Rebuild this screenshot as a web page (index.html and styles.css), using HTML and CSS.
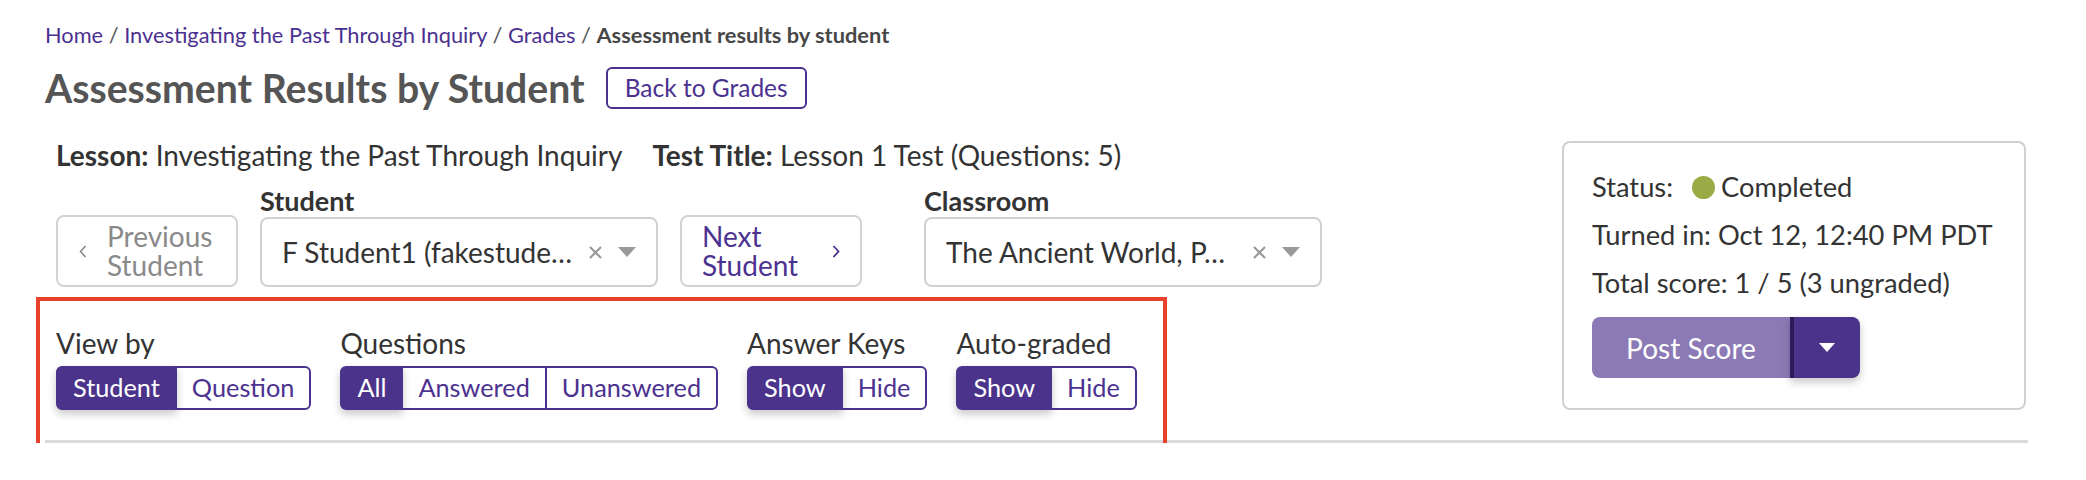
FILE: index.html
```html
<!DOCTYPE html>
<html lang="en">
<head>
<meta charset="utf-8">
<title>Assessment Results by Student</title>
<link rel="stylesheet" href="styles.css">
</head>
<body>
<div class="page">
  <nav class="breadcrumb">
    <a href="#">Home</a> / <a href="#">Investigating the Past Through Inquiry</a> / <a href="#">Grades</a> / <span class="current">Assessment results by student</span>
  </nav>

  <div class="title-row">
    <h1>Assessment Results by Student</h1>
    <button class="btn-outline" type="button">Back to Grades</button>
  </div>

  <div class="content">
    <div class="main">
      <p class="meta"><span><b>Lesson:</b> Investigating the Past Through Inquiry</span><span class="meta-item"><b>Test Title:</b> Lesson 1 Test (Questions: 5)</span></p>

      <div class="selectors">
        <button class="nav-btn prev" type="button" disabled>
          <svg class="chev" width="8" height="13" viewBox="0 0 8 13"><polyline points="6.5,1 1.5,6.5 6.5,12" fill="none" stroke="#8a8a8a" stroke-width="1.6"/></svg>
          <span>Previous<br>Student</span>
        </button>

        <div class="field">
          <label class="field-label">Student</label>
          <div class="select">
            <span class="value">F Student1 (fakestude…</span>
            <svg class="clear" width="15" height="15" viewBox="0 0 15 15"><path d="M2 2 L13 13 M13 2 L2 13" stroke="#9a9a9a" stroke-width="2.2" fill="none"/></svg>
            <svg class="arrow" width="18" height="10" viewBox="0 0 18 10"><polygon points="0,0 18,0 9,10" fill="#9a9a9a"/></svg>
          </div>
        </div>

        <button class="nav-btn next" type="button">
          <span>Next<br>Student</span>
          <svg class="chev" width="8" height="13" viewBox="0 0 8 13"><polyline points="1.5,1 6.5,6.5 1.5,12" fill="none" stroke="#4b3190" stroke-width="1.8"/></svg>
        </button>

        <div class="field classroom">
          <label class="field-label">Classroom</label>
          <div class="select">
            <span class="value">The Ancient World, P…</span>
            <svg class="clear" width="15" height="15" viewBox="0 0 15 15"><path d="M2 2 L13 13 M13 2 L2 13" stroke="#9a9a9a" stroke-width="2.2" fill="none"/></svg>
            <svg class="arrow" width="18" height="10" viewBox="0 0 18 10"><polygon points="0,0 18,0 9,10" fill="#9a9a9a"/></svg>
          </div>
        </div>
      </div>

      <div class="toggles">
        <div class="toggle">
          <div class="toggle-label">View by</div>
          <div class="seg"><button class="on" type="button">Student</button><button type="button">Question</button></div>
        </div>
        <div class="toggle">
          <div class="toggle-label">Questions</div>
          <div class="seg"><button class="on" type="button">All</button><button type="button">Answered</button><button type="button">Unanswered</button></div>
        </div>
        <div class="toggle">
          <div class="toggle-label">Answer Keys</div>
          <div class="seg"><button class="on" type="button">Show</button><button type="button">Hide</button></div>
        </div>
        <div class="toggle">
          <div class="toggle-label">Auto-graded</div>
          <div class="seg"><button class="on" type="button">Show</button><button type="button">Hide</button></div>
        </div>
      </div>
    </div>

    <aside class="card">
      <div class="card-line">Status: <span class="dot"></span>Completed</div>
      <div class="card-line">Turned in: Oct 12, 12:40 PM PDT</div>
      <div class="card-line">Total score: 1 / 5 (3 ungraded)</div>
      <div class="split">
        <button class="split-main" type="button">Post Score</button>
        <button class="split-drop" type="button"><svg width="16" height="9" viewBox="0 0 16 9"><polygon points="0,0 16,0 8,9" fill="#fff"/></svg></button>
      </div>
    </aside>
  </div>

  <hr class="divider">

  <div class="highlight"></div>
</div>
</body>
</html>
```

FILE: styles.css
```css
* { box-sizing: border-box; }
html, body { margin: 0; background: #fff; }
body { font-family: Lato, "Noto Sans", sans-serif; color: #333; }
button { font-family: Lato, "Noto Sans", sans-serif; cursor: pointer; }

.page { position: relative; padding: 21px 58px 0 45px; }

.breadcrumb { font-size: 21.8px; line-height: 28px; color: #555; }
.breadcrumb a { color: #4b3190; text-decoration: none; }
.breadcrumb .current { font-weight: 700; color: #474747; }

.title-row { display: flex; align-items: center; gap: 21px; margin-top: 16px; height: 46px; }
h1 { margin: 0; font-size: 39.2px; line-height: 46px; font-weight: 700; color: #555; }
.btn-outline { height: 42px; padding: 0 17px; border: 2px solid #4b3190; border-radius: 6px; background: #fff; color: #4b3190; font-size: 24.5px; line-height: 1; }

.content { display: flex; justify-content: space-between; align-items: flex-start; margin-top: 27px; }
.main { padding-left: 11px; }

.meta { margin: 0; font-size: 28px; line-height: 34px; color: #333; white-space: nowrap; }
.meta b { font-weight: 700; }
.meta-item { margin-left: 30px; }

.selectors { display: flex; align-items: flex-end; gap: 22px; margin-top: 13px; }
.nav-btn { flex: none; width: 182px; height: 72px; border: 2px solid #d3d3d3; border-radius: 8px; background: #fff; display: flex; align-items: center; font-size: 28px; line-height: 29px; text-align: left; }
.nav-btn.prev { color: #8a8a8a; gap: 20px; padding: 0 0 0 21px; cursor: default; }
.nav-btn.next { color: #4b3190; justify-content: space-between; padding: 0 20px; }
.chev { flex: none; }

.field-label { display: block; font-size: 27px; line-height: 32px; font-weight: 700; color: #333; }
.select { width: 398px; height: 70px; border: 2px solid #d0d0d0; border-radius: 8px; display: flex; align-items: center; padding: 0 20px; font-size: 28px; color: #333; }
.select .value { flex: 1; white-space: nowrap; overflow: hidden; }
.select .clear { flex: none; margin: 0 15px 0 8px; }
.select .arrow { flex: none; }
.classroom { margin-left: 40px; }

.toggles { display: flex; gap: 29px; margin-top: 40px; }
.toggle-label { font-size: 28px; line-height: 32px; color: #333; margin-bottom: 7px; white-space: nowrap; }
.seg { display: flex; }
.seg button { height: 44px; padding: 0 15px; border: 2px solid #4b3190; margin-left: -2px; background: #fff; color: #4b3190; font-size: 25.3px; line-height: 1; white-space: nowrap; }
.seg button:first-child { margin-left: 0; border-radius: 6px 0 0 6px; }
.seg button:last-child { border-radius: 0 6px 6px 0; }
.seg button.on { background: #4b338b; border-color: #4b338b; color: #fff; box-shadow: 0 4px 9px rgba(0, 0, 0, 0.22); position: relative; }

.card { flex: none; width: 464px; margin: 3px 2px 0 0; border: 2px solid #d0d0d0; border-radius: 8px; padding: 20px 28px 30px; }
.card-line { font-size: 27.3px; line-height: 48px; color: #333; display: flex; align-items: center; white-space: nowrap; }
.dot { width: 23px; height: 23px; border-radius: 50%; background: #9aab45; margin: 0 6px 0 19px; }
.split { display: inline-flex; height: 61px; margin-top: 10px; }
.split-main { width: 198px; border: none; border-radius: 8px 0 0 8px; background: #8c7ab6; color: #fff; font-size: 28px; }
.split-drop { width: 70px; border: none; border-left: 4px solid #2b1a5c; border-radius: 0 8px 8px 0; background: #4b338b; display: flex; align-items: center; justify-content: center; box-shadow: 0 4px 9px rgba(0, 0, 0, 0.22); }

.divider { margin: 30px 0 0; border: none; border-top: 3px solid #dadada; height: 0; }

.highlight { position: absolute; left: 36px; top: 297px; width: 1131px; height: 152px; border: 4px solid #e8432a; pointer-events: none; }
```
